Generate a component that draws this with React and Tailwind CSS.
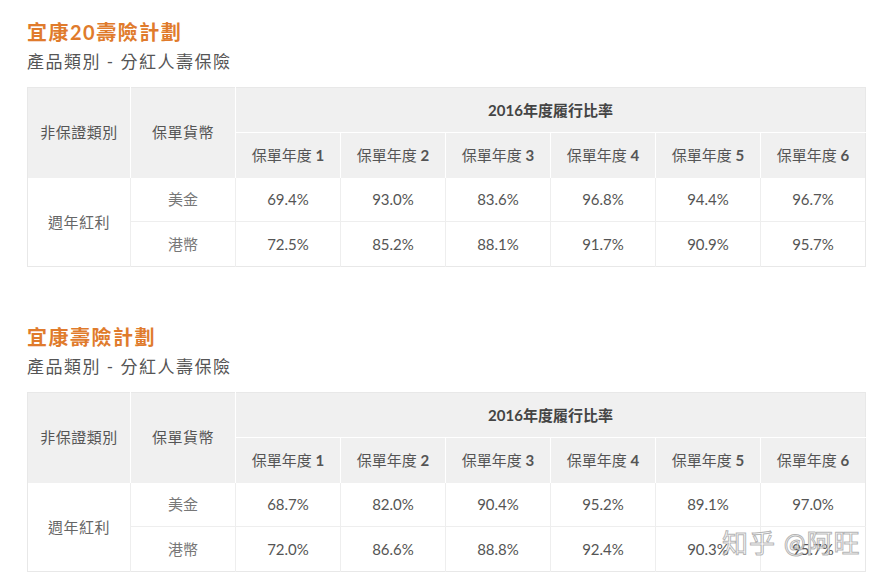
import React from 'react';

const plans = [
  {
    title: (
      <>
        宜康<span className="font-bold">20</span>壽險計劃
      </>
    ),
    usd: ['69.4%', '93.0%', '83.6%', '96.8%', '94.4%', '96.7%'],
    hkd: ['72.5%', '85.2%', '88.1%', '91.7%', '90.9%', '95.7%'],
  },
  {
    title: '宜康壽險計劃',
    usd: ['68.7%', '82.0%', '90.4%', '95.2%', '89.1%', '97.0%'],
    hkd: ['72.0%', '86.6%', '88.8%', '92.4%', '90.3%', '95.7%'],
  },
];

const font = { fontFamily: '"Lato", "Noto Sans CJK TC", sans-serif' };

const PlanTable = ({ plan }) => {
  return (
    <div>
      <h2 className="text-[20px] leading-[28px] tracking-[1.5px] font-bold text-[#e07b2c]">{plan.title}</h2>
      <p className="mt-[4px] text-[17px] leading-[24px] tracking-[1.5px] text-[#555]">產品類別 - 分紅人壽保險</p>
      <table className="mt-[13px] w-[838px] table-fixed border-collapse border border-[#e8e8e8]">
        <colgroup>
          <col className="w-[103px]" />
          <col className="w-[105px]" />
          <col className="w-[105px]" />
          <col className="w-[105px]" />
          <col className="w-[105px]" />
          <col className="w-[105px]" />
          <col className="w-[105px]" />
          <col className="w-[105px]" />
        </colgroup>
        <thead className="bg-[#f0f0f0] text-[15px] text-[#555]">
          <tr className="h-[45px]">
            <th rowSpan={2} className="font-normal tracking-[0.5px] border-r border-white pb-[2px]">非保證類別</th>
            <th rowSpan={2} className="font-normal tracking-[0.5px] border-r border-white pb-[2px]">保單貨幣</th>
            <th colSpan={6} className="font-bold text-[#444] border-b border-white">2016年度履行比率</th>
          </tr>
          <tr className="h-[45px]">
            {[1, 2, 3, 4, 5, 6].map((n) => (
              <th key={n} className="font-normal border-r border-white last:border-r-0">
                保單年度 <span className="font-bold">{n}</span>
              </th>
            ))}
          </tr>
        </thead>
        <tbody className="text-[15px] text-[#555]">
          <tr className="h-[44px] border-b border-[#eee]">
            <td rowSpan={2} className="text-center tracking-[0.5px] text-[#666] border-r border-[#eee]">週年紅利</td>
            <td className="text-center text-[#777] border-r border-[#eee]">美金</td>
            {plan.usd.map((v, i) => (
              <td key={i} className="text-center border-r border-[#eee] last:border-r-0">{v}</td>
            ))}
          </tr>
          <tr className="h-[45px]">
            <td className="text-center text-[#777] border-r border-[#eee]">港幣</td>
            {plan.hkd.map((v, i) => (
              <td key={i} className="text-center border-r border-[#eee] last:border-r-0">{v}</td>
            ))}
          </tr>
        </tbody>
      </table>
    </div>
  );
};

export default function App() {
  return (
    <div className="relative w-[885px] h-[581px] overflow-hidden bg-white px-[27px] pt-[18px]" style={font}>
      <div className="flex flex-col gap-[56px]">
        {plans.map((plan, i) => (
          <PlanTable key={i} plan={plan} />
        ))}
      </div>
      <div
        className="absolute left-[722px] top-[527px] text-[26px] leading-[32px] tracking-[1px] text-white/70"
        style={{ WebkitTextStroke: '1px rgba(130,130,130,0.6)' }}
      >
        知乎 @阿旺
      </div>
    </div>
  );
}
